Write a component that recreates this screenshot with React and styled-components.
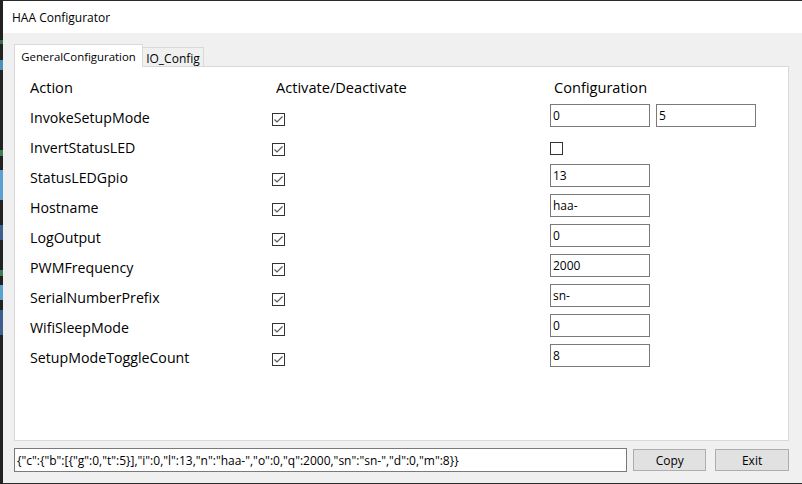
import React from "react";
import styled, { createGlobalStyle } from "styled-components";

const Global = createGlobalStyle`
  html, body { margin: 0; padding: 0; background: #1e1e1e; }
  body { font-family: "Segoe UI", "Open Sans", "Noto Sans", sans-serif; }
  * { box-sizing: border-box; }
`;

const Page = styled.div`
  display: flex;
  width: 802px;
  height: 484px;
  overflow: hidden;
`;

const DesktopStrip = styled.div`
  flex: 0 0 3px;
  height: 484px;
  background: linear-gradient(
    to bottom,
    #222 0 40px, #3a6f4a 40px 44px, #222 44px 60px, #4c8fb8 60px 70px,
    #222 70px 150px, #3c7f52 150px 156px, #222 156px 170px, #5aa1cf 170px 200px,
    #222 200px 225px, #3d5f8f 225px 240px, #222 240px 270px, #3c7f52 270px 276px,
    #222 276px 285px, #5aa1cf 285px 300px, #222 300px 310px, #3d5f8f 310px 335px, #222 335px
  );
`;

const Window = styled.div`
  flex: 0 0 799px;
  min-width: 0;
  display: flex;
  flex-direction: column;
  border-top: 1px solid #2b2b2b;
  border-bottom: 1px solid #2b2b2b;
  background: #f0f0f0;
`;

const TitleBar = styled.div`
  height: 32px;
  background: #ffffff;
  display: flex;
  align-items: center;
  padding-left: 9px;
  font-size: 12px;
  color: #000;
`;

const Body = styled.div`
  flex: 1;
  display: flex;
  flex-direction: column;
  padding: 11px 13px 0 11px;
`;

const TabStrip = styled.div`
  display: flex;
  align-items: flex-end;
  height: 22px;
  position: relative;
  z-index: 1;
`;

const Tab = styled.div`
  font-size: ${(p) => (p.$active ? "11.4px" : "12px")};
  color: #000;
  border: 1px solid #d9d9d9;
  border-bottom: none;
  display: flex;
  align-items: center;
  justify-content: center;
  background: ${(p) => (p.$active ? "#ffffff" : "#f0f0f0")};
  height: ${(p) => (p.$active ? "23px" : "19px")};
  margin-bottom: ${(p) => (p.$active ? "-1px" : "0")};
  width: ${(p) => p.$w}px;
  margin-left: ${(p) => (p.$active ? "0" : "-1px")};
  padding-top: ${(p) => (p.$active ? "0" : "2px")};
  position: relative;
  z-index: ${(p) => (p.$active ? 2 : 1)};
`;

const Panel = styled.div`
  height: 375px;
  background: #ffffff;
  border: 1px solid #d9d9d9;
  padding: 5px 0 0 15px;
`;

const Grid = styled.div`
  display: grid;
  grid-template-columns: 242px 278px auto;
  grid-auto-rows: 30px;
`;

const HeaderCell = styled.div`
  font-size: 14.6px;
  color: #000;
  display: flex;
  align-items: center;
  padding-left: ${(p) => p.$indent || 0}px;
`;

const LabelCell = styled.div`
  font-size: 14.2px;
  color: #000;
  padding-top: 6px;
  line-height: 20px;
`;

const CheckCell = styled.div`
  padding-top: ${(p) => p.$top}px;
`;

const ConfigCell = styled.div`
  display: flex;
  gap: 6px;
  padding-top: 2px;
`;

const Box = styled.div`
  width: 13px;
  height: 13px;
  border: 1px solid #333333;
  background: #fff;
  display: flex;
  align-items: center;
  justify-content: center;
`;

const Field = styled.div`
  width: 100px;
  height: 23px;
  border: 1px solid #7a7a7a;
  background: #fff;
  font-size: 12px;
  color: #000;
  display: flex;
  align-items: center;
  padding-left: 2px;
`;

const BottomBar = styled.div`
  display: flex;
  align-items: center;
  margin-top: 7px;
  height: 24px;
`;

const JsonField = styled.div`
  width: 615px;
  height: 24px;
  border: 1px solid #7a7a7a;
  background: #fff;
  font-size: 12px;
  color: #000;
  display: flex;
  align-items: center;
  padding-left: 2px;
  white-space: nowrap;
  overflow: hidden;
`;

const Button = styled.div`
  width: ${(p) => p.$w}px;
  height: 22px;
  margin-left: ${(p) => p.$gap}px;
  background: #e1e1e1;
  border: 1px solid #adadad;
  font-size: 12px;
  color: #000;
  display: flex;
  align-items: center;
  justify-content: center;
`;

const CheckBox = ({ checked }) => (
  <Box>
    {checked && (
      <svg width="11" height="11" viewBox="0 0 11 11">
        <path d="M1.5 5.5 L4 8 L9.5 2.5" fill="none" stroke="#5a5a5a" strokeWidth="1.2" />
      </svg>
    )}
  </Box>
);

const rows = [
  { name: "InvokeSetupMode", fields: ["0", "5"] },
  { name: "InvertStatusLED", box: true },
  { name: "StatusLEDGpio", fields: ["13"] },
  { name: "Hostname", fields: ["haa-"] },
  { name: "LogOutput", fields: ["0"] },
  { name: "PWMFrequency", fields: ["2000"] },
  { name: "SerialNumberPrefix", fields: ["sn-"] },
  { name: "WifiSleepMode", fields: ["0"] },
  { name: "SetupModeToggleCount", fields: ["8"] },
];

const json =
  '{"c":{"b":[{"g":0,"t":5}],"i":0,"l":13,"n":"haa-","o":0,"q":2000,"sn":"sn-","d":0,"m":8}}';

export default function App() {
  return (
    <>
      <Global />
      <Page>
        <DesktopStrip />
        <Window>
          <TitleBar>HAA Configurator</TitleBar>
          <Body>
            <TabStrip>
              <Tab $active $w={129}>GeneralConfiguration</Tab>
              <Tab $w={62}>IO_Config</Tab>
            </TabStrip>
            <Panel>
              <Grid>
                <HeaderCell>Action</HeaderCell>
                <HeaderCell $indent={4}>Activate/Deactivate</HeaderCell>
                <HeaderCell $indent={4}>Configuration</HeaderCell>
                {rows.map((r) => (
                  <React.Fragment key={r.name}>
                    <LabelCell>{r.name}</LabelCell>
                    <CheckCell $top={11}>
                      <CheckBox checked />
                    </CheckCell>
                    {r.box ? (
                      <CheckCell $top={10}>
                        <CheckBox />
                      </CheckCell>
                    ) : (
                      <ConfigCell>
                        {r.fields.map((f, i) => (
                          <Field key={i}>{f}</Field>
                        ))}
                      </ConfigCell>
                    )}
                  </React.Fragment>
                ))}
              </Grid>
            </Panel>
            <BottomBar>
              <JsonField>{json}</JsonField>
              <Button $w={73} $gap={6}>Copy</Button>
              <Button $w={74} $gap={9}>Exit</Button>
            </BottomBar>
          </Body>
        </Window>
      </Page>
    </>
  );
}
